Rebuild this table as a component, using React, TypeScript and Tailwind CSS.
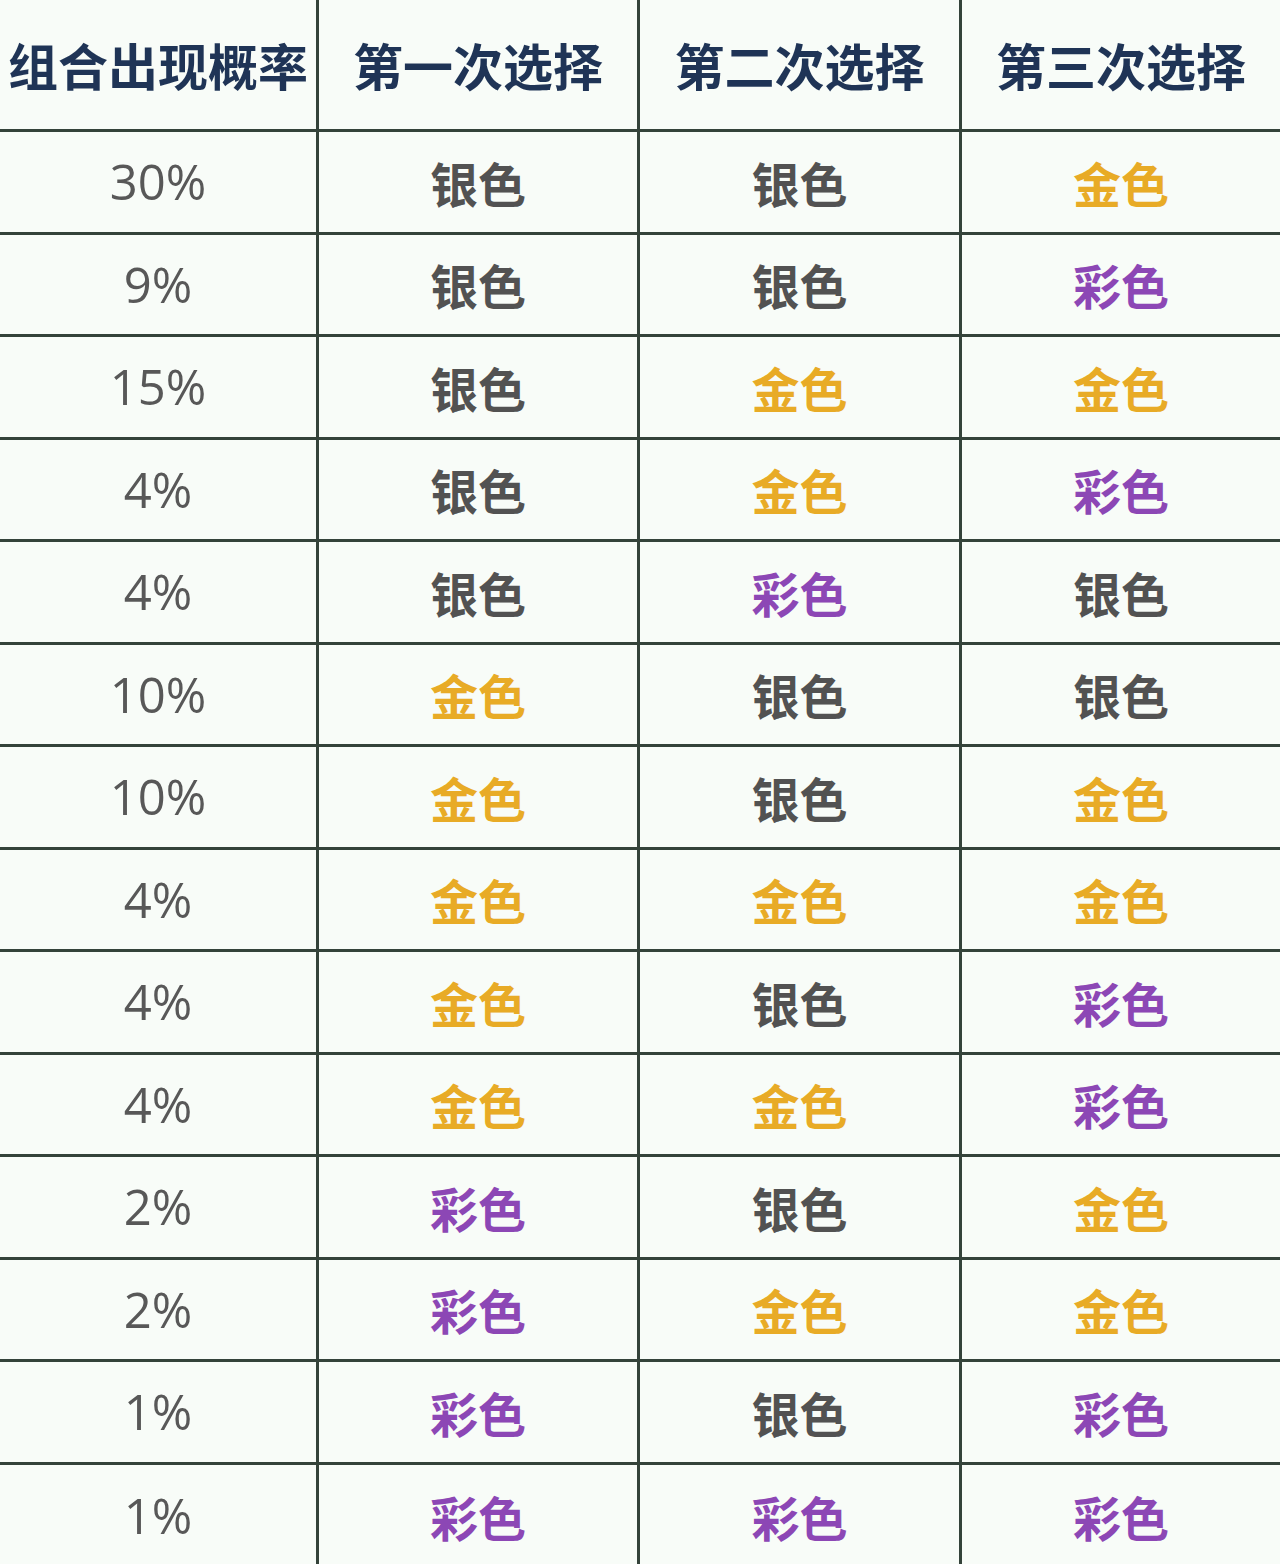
import React from "react";

type Tier = "银色" | "金色" | "彩色";

const rows: [string, Tier, Tier, Tier][] = [
  ["30%", "银色", "银色", "金色"],
  ["9%", "银色", "银色", "彩色"],
  ["15%", "银色", "金色", "金色"],
  ["4%", "银色", "金色", "彩色"],
  ["4%", "银色", "彩色", "银色"],
  ["10%", "金色", "银色", "银色"],
  ["10%", "金色", "银色", "金色"],
  ["4%", "金色", "金色", "金色"],
  ["4%", "金色", "银色", "彩色"],
  ["4%", "金色", "金色", "彩色"],
  ["2%", "彩色", "银色", "金色"],
  ["2%", "彩色", "金色", "金色"],
  ["1%", "彩色", "银色", "彩色"],
  ["1%", "彩色", "彩色", "彩色"],
];

const tierColor: Record<Tier, string> = {
  银色: "text-[#525252]",
  金色: "text-[#e8ab26]",
  彩色: "text-[#8c47b5]",
};

const headers = ["组合出现概率", "第一次选择", "第二次选择", "第三次选择"];
const colWidths = ["w-[316px]", "w-[321px]", "w-[322px]", "w-[321px]"];

const cjk = "font-['Noto_Sans_CJK_SC','Noto_Sans',sans-serif]";

export default function App() {
  return (
    <div className={`w-[1280px] h-[1564px] bg-[#f8fcf8] ${cjk} overflow-hidden`}>
      <div className="flex h-[132px] border-b-[3px] border-[#34433a]">
        {headers.map((h, i) => (
          <div
            key={h}
            className={`${colWidths[i]} flex items-center justify-center pb-[1px] ${
              i > 0 ? "border-l-[3px] border-[#34433a]" : ""
            } text-[50px] font-bold text-[#1f3456]`}
          >
            {h}
          </div>
        ))}
      </div>
      {rows.map((r, ri) => (
        <div
          key={ri}
          className={`flex h-[102.5px] ${
            ri < rows.length - 1 ? "border-b-[3px] border-[#34433a]" : ""
          }`}
        >
          <div
            className={`${colWidths[0]} flex items-center justify-center text-[49px] font-normal text-[#585858] font-['Open_Sans','Noto_Sans',sans-serif]`}
          >
            {r[0]}
          </div>
          {[r[1], r[2], r[3]].map((t, ci) => (
            <div
              key={ci}
              className={`${colWidths[ci + 1]} flex items-center justify-center border-l-[3px] border-[#34433a] text-[48px] font-semibold ${tierColor[t]}`}
            >
              {t}
            </div>
          ))}
        </div>
      ))}
    </div>
  );
}
